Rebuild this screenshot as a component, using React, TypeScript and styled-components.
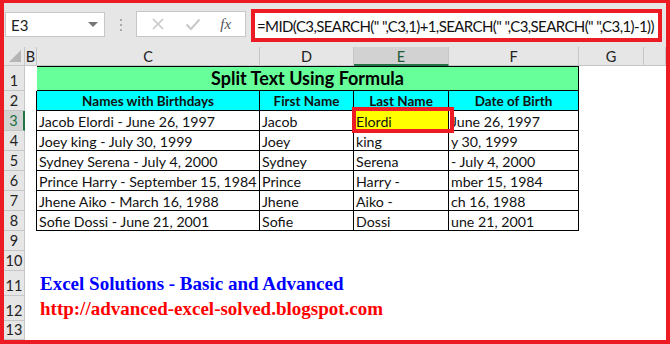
import React from 'react';
import styled, { createGlobalStyle } from 'styled-components';

const GlobalStyle = createGlobalStyle`
  html, body { margin: 0; padding: 0; background: #fff; }
  * { box-sizing: border-box; }
`;

const Frame = styled.div`
  width: 670px;
  height: 344px;
  border-left: 4px solid #ed1c24;
  border-right: 4px solid #ed1c24;
  border-top: 3px solid #ed1c24;
  border-bottom: 4px solid #ed1c24;
  display: flex;
  flex-direction: column;
  overflow: hidden;
  font-family: Lato, "Liberation Sans", sans-serif;
`;

const Toolbar = styled.div`
  height: 45px;
  background: #e6e6e6;
  display: flex;
  align-items: flex-start;
  padding: 9px 0 0 1px;
`;

const NameBox = styled.div`
  width: 100px;
  height: 25px;
  background: #fff;
  border: 1px solid #c6c6c6;
  display: flex;
  align-items: center;
  justify-content: space-between;
  padding: 0 6px 0 5px;
  font-size: 15px;
  color: #222;
`;

const DropArrow = styled.span`
  width: 0;
  height: 0;
  border-left: 5px solid transparent;
  border-right: 5px solid transparent;
  border-top: 5px solid #777;
`;

const Dots = styled.div`
  width: 31px;
  height: 25px;
  display: flex;
  flex-direction: column;
  align-items: center;
  justify-content: center;
  gap: 3px;
  span {
    width: 2px;
    height: 2px;
    background: #aaa;
  }
`;

const FuncBox = styled.div`
  width: 110px;
  height: 26px;
  margin-top: -1px;
  background: #fff;
  border: 1px solid #c6c6c6;
  display: flex;
  align-items: center;
  justify-content: space-around;
  padding: 0 4px;
`;

const Fx = styled.span`
  font-family: "Liberation Serif", serif;
  font-style: italic;
  font-size: 15px;
  color: #555;
`;

const FormulaBox = styled.div`
  margin-left: 5px;
  margin-top: -3px;
  width: 411px;
  height: 33px;
  border: 4px solid #ed1c24;
  background: #fff;
  display: flex;
  align-items: center;
  padding-left: 2px;
  font-size: 15px;
  letter-spacing: -0.6px;
  color: #111;
  white-space: nowrap;
  overflow: hidden;
`;

const Sheet = styled.div`
  flex: 1;
  display: grid;
  grid-template-columns: 21px 12px 223px 94px 95px 130px 65px 1fr;
  grid-template-rows: 19px 25px repeat(9, 20px) 25px 25px 1fr;
  background: #fff;
  color: #111;
`;

const ColHead = styled.div<{ $sel?: boolean }>`
  background: ${(p) => (p.$sel ? '#d2d2d2' : '#e6e6e6')};
  border-right: 1px solid #c6c6c6;
  border-bottom: ${(p) => (p.$sel ? '2px solid #217346' : '1px solid #c6c6c6')};
  display: flex;
  align-items: center;
  justify-content: center;
  font-size: 14.5px;
  color: ${(p) => (p.$sel ? '#1e5c38' : '#222')};
  position: relative;
  padding-top: 1px;
`;

const CornerTri = styled.span`
  position: absolute;
  right: 3px;
  bottom: 3px;
  width: 0;
  height: 0;
  border-left: 12px solid transparent;
  border-bottom: 12px solid #b5b5b5;
`;

const RowHead = styled.div<{ $sel?: boolean }>`
  background: ${(p) => (p.$sel ? '#d2d2d2' : '#e6e6e6')};
  border-right: ${(p) => (p.$sel ? '2px solid #217346' : '1px solid #c6c6c6')};
  border-bottom: 1px solid #c6c6c6;
  display: flex;
  align-items: flex-end;
  justify-content: center;
  padding-bottom: 1px;
  font-size: 14.5px;
  color: ${(p) => (p.$sel ? '#217346' : '#222')};
`;

const Blank = styled.div<{ $edge?: boolean }>`
  background: #fff;
  border-right: ${(p) => (p.$edge ? '1px solid #000' : 'none')};
`;

const Title = styled.div`
  grid-column: span 4;
  background: #66ff99;
  border-top: 1px solid #000;
  border-right: 1px solid #000;
  border-bottom: 1px solid #000;
  display: flex;
  align-items: flex-end;
  justify-content: center;
  padding-bottom: 1px;
  font-weight: 700;
  font-size: 18px;
  color: #000;
`;

const HeadCell = styled.div`
  background: #00ffff;
  border-right: 1px solid #000;
  border-bottom: 1px solid #000;
  display: flex;
  align-items: flex-end;
  justify-content: center;
  padding-bottom: 1px;
  font-weight: 700;
  font-size: 13.5px;
  color: #111;
`;

const Cell = styled.div<{ $hl?: boolean }>`
  position: relative;
  z-index: ${(p) => (p.$hl ? 2 : 'auto')};
  background: ${(p) => (p.$hl ? '#ffff00' : '#fff')};
  border-right: 1px solid #000;
  border-bottom: 1px solid #000;
  display: flex;
  align-items: flex-end;
  padding: 0 0 0 2px;
  white-space: nowrap;
  overflow: ${(p) => (p.$hl ? 'visible' : 'hidden')};
  font-size: 14.2px;
  color: #111;
`;

const SelectFrame = styled.span`
  position: absolute;
  left: -2px;
  top: -4px;
  right: -6px;
  bottom: -3px;
  border: 4px solid #ed1c24;
  pointer-events: none;
`;

const Note = styled.div<{ $color: string }>`
  grid-column: 3 / span 5;
  display: flex;
  align-items: flex-end;
  padding: 0 0 1px 3px;
  font-family: "Liberation Serif", serif;
  font-weight: 700;
  font-size: 19px;
  color: ${(p) => p.$color};
  white-space: nowrap;
`;

const rows = [
  ['Jacob Elordi - June 26, 1997', 'Jacob', 'Elordi', 'June 26, 1997'],
  ['Joey king - July 30, 1999', 'Joey', 'king', 'y 30, 1999'],
  ['Sydney Serena - July 4, 2000', 'Sydney', 'Serena', '- July 4, 2000'],
  ['Prince Harry - September 15, 1984', 'Prince', 'Harry -', 'mber 15, 1984'],
  ['Jhene Aiko - March 16, 1988', 'Jhene', 'Aiko -', 'ch 16, 1988'],
  ['Sofie Dossi - June 21, 2001', 'Sofie', 'Dossi', 'une 21, 2001'],
];

const cols = ['B', 'C', 'D', 'E', 'F', 'G', ''];

function Cross() {
  return (
    <svg width="14" height="14" viewBox="0 0 14 14">
      <path d="M2 2L12 12M12 2L2 12" stroke="#c8c8c8" strokeWidth="1.6" />
    </svg>
  );
}

function Check() {
  return (
    <svg width="16" height="14" viewBox="0 0 16 14">
      <path d="M1.5 7.5L6 12L14.5 2.5" stroke="#c8c8c8" strokeWidth="2" fill="none" />
    </svg>
  );
}

export default function App() {
  return (
    <>
      <GlobalStyle />
      <Frame>
        <Toolbar>
          <NameBox>
            E3
            <DropArrow />
          </NameBox>
          <Dots>
            <span />
            <span />
            <span />
          </Dots>
          <FuncBox>
            <Cross />
            <Check />
            <Fx>fx</Fx>
          </FuncBox>
          <FormulaBox>=MID(C3,SEARCH(" ",C3,1)+1,SEARCH(" ",C3,SEARCH(" ",C3,1)-1))</FormulaBox>
        </Toolbar>
        <Sheet>
          <ColHead>
            <CornerTri />
          </ColHead>
          {cols.map((c, i) => (
            <ColHead key={i} $sel={c === 'E'}>
              {c}
            </ColHead>
          ))}

          <RowHead>1</RowHead>
          <Blank />
          <Title>Split Text Using Formula</Title>
          <Blank />
          <Blank />

          <RowHead>2</RowHead>
          <Blank $edge />
          <HeadCell>Names with Birthdays</HeadCell>
          <HeadCell>First Name</HeadCell>
          <HeadCell>Last Name</HeadCell>
          <HeadCell>Date of Birth</HeadCell>
          <Blank />
          <Blank />

          {rows.map((r, i) => (
            <React.Fragment key={i}>
              <RowHead $sel={i === 0}>{i + 3}</RowHead>
              <Blank $edge />
              {r.map((v, j) => (
                <Cell key={j} $hl={i === 0 && j === 2}>
                  {v}
                  {i === 0 && j === 2 && <SelectFrame />}
                </Cell>
              ))}
              <Blank />
              <Blank />
            </React.Fragment>
          ))}

          {[9, 10].map((n) => (
            <React.Fragment key={n}>
              <RowHead>{n}</RowHead>
              {cols.map((_, j) => (
                <Blank key={j} />
              ))}
            </React.Fragment>
          ))}

          <RowHead>11</RowHead>
          <Blank />
          <Note $color="#0000ff">Excel Solutions - Basic and Advanced</Note>
          <Blank />

          <RowHead>12</RowHead>
          <Blank />
          <Note $color="#ff0000">http://advanced-excel-solved.blogspot.com</Note>
          <Blank />

          <RowHead>13</RowHead>
          {cols.map((_, j) => (
            <Blank key={j} />
          ))}
        </Sheet>
      </Frame>
    </>
  );
}
